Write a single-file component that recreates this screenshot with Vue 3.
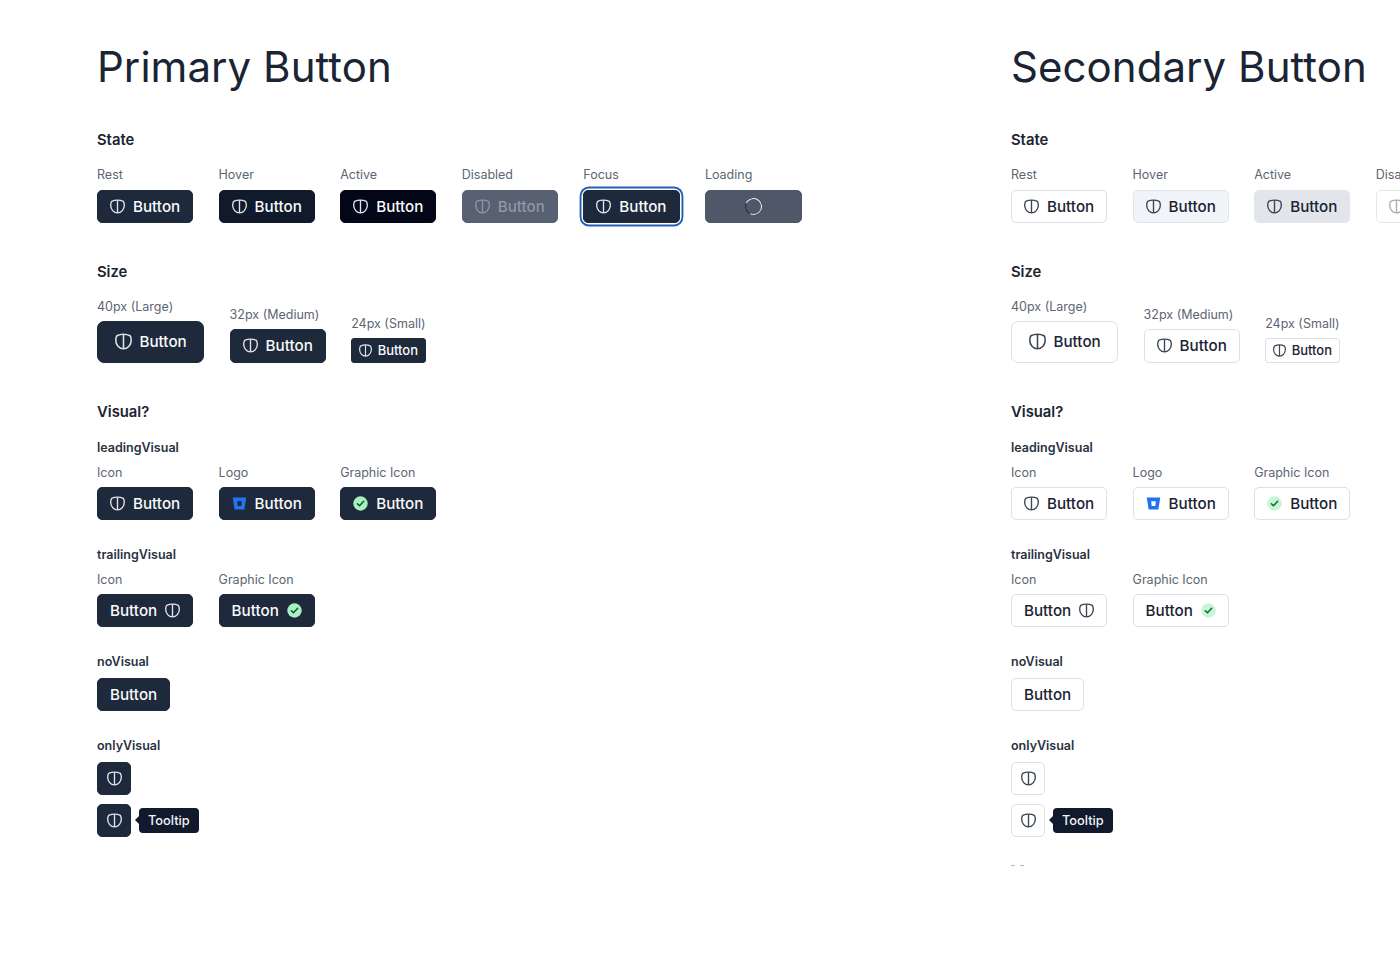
<script setup>
const sharedSizes = [
  { label: '40px (Large)', size: 'lg' },
  { label: '32px (Medium)', size: 'md' },
  { label: '24px (Small)', size: 'sm' },
]

const leading = [
  { label: 'Icon', visual: 'shield' },
  { label: 'Logo', visual: 'logo' },
  { label: 'Graphic Icon', visual: 'check' },
]

const trailing = [
  { label: 'Icon', visual: 'shield', trail: true },
  { label: 'Graphic Icon', visual: 'check', trail: true },
]

const columns = [
  {
    title: 'Primary Button',
    kind: 'primary',
    states: [
      { label: 'Rest', state: 'rest' },
      { label: 'Hover', state: 'hover' },
      { label: 'Active', state: 'active' },
      { label: 'Disabled', state: 'disabled' },
      { label: 'Focus', state: 'focus' },
      { label: 'Loading', state: 'loading' },
    ],
  },
  {
    title: 'Secondary Button',
    kind: 'secondary',
    states: [
      { label: 'Rest', state: 'rest' },
      { label: 'Hover', state: 'hover' },
      { label: 'Active', state: 'active' },
      { label: 'Disabled', state: 'disabled' },
    ],
  },
]
</script>

<template>
  <svg class="defs" aria-hidden="true">
    <symbol id="shield" viewBox="0.300 0.700 15.400 15.400">
      <path d="M2 3.200C3.800 2.300 5.800 1.800 8 1.800s4.200.5 6 1.400c.7 1.200 1 2.400 1 3.800 0 4.300-3.100 8-7 8s-7-3.700-7-8c0-1.400.3-2.600 1-3.800Z" fill="none" stroke="currentColor" stroke-width="1.400" stroke-linejoin="round" />
      <path d="M8 2v13" fill="none" stroke="currentColor" stroke-width="1.400" />
    </symbol>
    <symbol id="logo" viewBox="0 0 16 16">
      <path d="M0.800 1.500h14.400l-2 13H2.800Z" fill="#2273f0" />
      <path d="M5.500 5.500h5l-.6 5.200H6.100Z" fill="var(--logo-hole)" />
    </symbol>
    <symbol id="check" viewBox="0 0 16 16">
      <circle cx="8" cy="8" r="7.700" fill="var(--check-fill)" />
      <path d="M4.600 8.200l2.300 2.300 4.500-4.800" fill="none" stroke="var(--check-stroke)" stroke-width="1.600" stroke-linecap="round" stroke-linejoin="round" />
    </symbol>
  </svg>

  <main class="page">
    <section v-for="col in columns" :key="col.title" class="column" :class="col.kind">
      <h1 class="title">{{ col.title }}</h1>

      <h2 class="heading state-heading">State</h2>
      <div class="row state-row">
        <div v-for="item in col.states" :key="item.label" class="cell">
          <span class="label">{{ item.label }}</span>
          <span class="focus-ring" :class="{ on: item.state === 'focus' }">
            <button class="btn" :class="item.state" type="button">
              <span v-if="item.state === 'loading'" class="spinner"></span>
              <template v-else>
                <svg class="icon"><use href="#shield" /></svg>
                <span>Button</span>
              </template>
            </button>
          </span>
        </div>
      </div>

      <h2 class="heading size-heading">Size</h2>
      <div class="row size-row">
        <div v-for="item in sharedSizes" :key="item.label" class="cell">
          <span class="label">{{ item.label }}</span>
          <button class="btn" :class="item.size" type="button">
            <svg class="icon"><use href="#shield" /></svg>
            <span>Button</span>
          </button>
        </div>
      </div>

      <h2 class="heading visual-heading">Visual?</h2>

      <h3 class="sub first-sub">leadingVisual</h3>
      <div class="row">
        <div v-for="item in leading" :key="item.label" class="cell">
          <span class="label">{{ item.label }}</span>
          <button class="btn" type="button">
            <svg class="icon"><use :href="'#' + item.visual" /></svg>
            <span>Button</span>
          </button>
        </div>
      </div>

      <h3 class="sub">trailingVisual</h3>
      <div class="row">
        <div v-for="item in trailing" :key="item.label" class="cell">
          <span class="label">{{ item.label }}</span>
          <button class="btn" type="button">
            <span>Button</span>
            <svg class="icon"><use :href="'#' + item.visual" /></svg>
          </button>
        </div>
      </div>

      <h3 class="sub">noVisual</h3>
      <div class="row tight">
        <button class="btn" type="button">Button</button>
      </div>

      <h3 class="sub">onlyVisual</h3>
      <div class="only tight">
        <button class="btn only-btn" type="button" aria-label="Button">
          <svg class="icon"><use href="#shield" /></svg>
        </button>
        <div class="with-tip">
          <button class="btn only-btn" type="button" aria-label="Button">
            <svg class="icon"><use href="#shield" /></svg>
          </button>
          <span class="tooltip">Tooltip</span>
        </div>
      </div>

      <div v-if="col.kind === 'secondary'" class="faded" aria-hidden="true"><i></i><i></i></div>
    </section>
  </main>
</template>

<style>
html, body { margin: 0; background: #ffffff; overflow: hidden; }
</style>

<style scoped>
.defs { position: absolute; width: 0; height: 0; overflow: hidden; }

.page {
  display: flex;
  width: 1400px;
  height: 963px;
  overflow: hidden;
  padding-left: 97px;
  box-sizing: border-box;
  background: #fff;
  font-family: Inter, "Liberation Sans", sans-serif;
  color: #1a2233;
}

.column { flex: 0 0 914px; min-width: 914px; }

.primary {
  --logo-hole: #1e293b;
  --check-fill: #a7f0c0;
  --check-stroke: #14532d;
}
.secondary {
  --logo-hole: #ffffff;
  --check-fill: #c6f5d5;
  --check-stroke: #166534;
}

.title {
  margin: 41px 0 0;
  font-size: 42px;
  line-height: 52px;
  font-weight: 400;
  letter-spacing: 0.05px;
  color: #1a2433;
}

.heading {
  margin: 0;
  font-size: 14.800px;
  line-height: 20px;
  font-weight: 600;
  color: #1b2431;
}
.state-heading { margin-top: 37px; }
.size-heading { margin-top: 39px; }
.visual-heading { margin-top: 39px; }

.sub {
  margin: 25.600px 0 0;
  font-size: 12.500px;
  line-height: 18px;
  font-weight: 600;
  color: #2a3342;
}
.first-sub { margin-top: 17px; }

.row { display: flex; gap: 25.400px; margin-top: 7px; }
.state-row { margin-top: 15.500px; }
.state-row .cell { gap: 6px; }
.size-row { align-items: flex-end; margin-top: 16px; }
.tight { margin-top: 7px; }

.cell { display: flex; flex-direction: column; gap: 5px; flex: none; }

.label {
  font-size: 12.500px;
  line-height: 18px;
  color: #5c6573;
  white-space: nowrap;
}

.focus-ring { display: inline-flex; border-radius: 6px; }
.focus-ring.on { box-shadow: 0 0 0 1.500px #fff, 0 0 0 3.400px #1f5fb4; }

.btn {
  display: inline-flex;
  align-items: center;
  justify-content: center;
  gap: 8px;
  height: 33.400px;
  padding: 0 12px;
  box-sizing: border-box;
  border-radius: 5px;
  border: 1px solid #1e293b;
  background: #1e293b;
  color: #f8fafc;
  font-family: inherit;
  font-size: 15.200px;
  font-weight: 550;
  white-space: nowrap;
}
.btn .icon { width: 15px; height: 15px; flex: none; color: #dfe4ea; }
.btn.hover { background: #111a2b; border-color: #111a2b; }
.btn.active { background: #020617; border-color: #020617; }
.btn.disabled { background: #576171; border-color: #576171; color: #8f97a3; }
.btn.disabled .icon { color: #8f97a3; }
.btn.loading { background: #4e5869; border-color: #4e5869; width: 97px; }
.btn.lg { height: 41.700px; padding: 0 16.500px; gap: 8px; border-radius: 7px; }
.btn.lg .icon { width: 17px; height: 17px; }
.btn.sm { height: 25px; padding: 0 7px; gap: 5.500px; font-size: 13px; border-radius: 3px; }
.btn.sm .icon { width: 13px; height: 13px; }
.only-btn { width: 34px; padding: 0; }

.secondary .btn {
  background: #fff;
  border-color: #dcdfe4;
  color: #1a2233;
}
.secondary .btn .icon { color: #3c4552; }
.secondary .btn.hover { background: #f1f4f8; border-color: #e0e5ea; }
.secondary .btn.active { background: #e2e5ea; border-color: #e2e5ea; }
.secondary .btn.disabled { color: #a6acb5; background: #fff; border-color: #e6e8eb; }
.secondary .btn.disabled .icon { color: #a6acb5; }

.spinner {
  width: 17px;
  height: 17px;
  box-sizing: border-box;
  border-radius: 50%;
  border: 1.500px solid #eef1f4;
  border-left-color: #232c3b;
  border-bottom-color: #cfd4da;
  transform: rotate(-20deg);
}

.only { display: flex; flex-direction: column; gap: 8.600px; align-items: flex-start; }
.with-tip { display: flex; align-items: center; gap: 8px; }

.tooltip {
  position: relative;
  display: inline-flex;
  align-items: center;
  height: 25px;
  padding: 0 9px;
  border-radius: 4px;
  background: #111a2c;
  color: #f1f5f9;
  font-size: 12.800px;
  font-weight: 550;
}
.tooltip::before {
  content: "";
  position: absolute;
  left: -4px;
  top: 50%;
  margin-top: -4px;
  border-style: solid;
  border-width: 4px 4px 4px 0;
  border-color: transparent #111a2c transparent transparent;
}

.faded { display: flex; gap: 5px; margin-top: 28px; }
.faded i { width: 4px; height: 1px; background: #b4b8be; }
</style>
